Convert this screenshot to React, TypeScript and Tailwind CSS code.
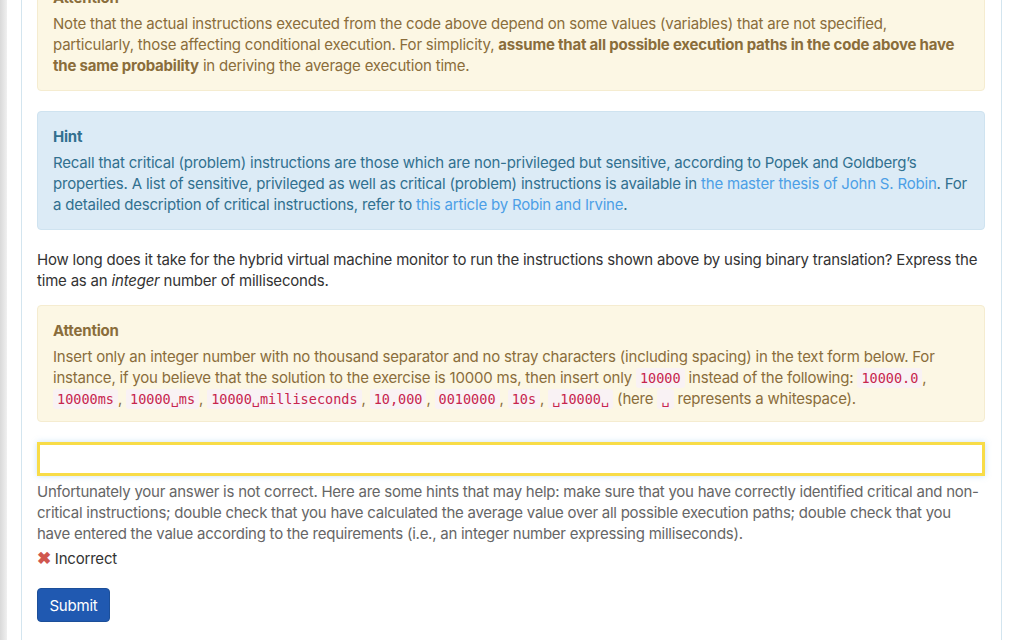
import React from "react";

const C = ({ children }: { children: React.ReactNode }) => (
  <code className="rounded-[3px] bg-[#f9f2f4] px-[4px] py-[2px] text-[13.5px] leading-none tracking-normal text-[#c7254e] [font-family:'DejaVu_Sans_Mono',monospace]">
    {children}
  </code>
);

export default function App() {
  return (
    <div className="flex h-[640px] w-[1024px] overflow-hidden bg-white text-[15px] leading-[21px] tracking-[-0.2px] text-[#333] [font-family:Inter,'Liberation_Sans',sans-serif]">
      <div className="w-[7px] shrink-0 bg-gradient-to-r from-[#d9d9d9] to-[#f0f0f0]" />
      <div className="w-[14px] shrink-0" />
      <div className="w-[981px] shrink-0 border-x border-[#d3e5ef] pl-[15px] pr-[16px]">
        <div className="-mt-[28px] rounded-[4px] border border-[#f5ecd0] bg-[#fcf7e4] px-[15px] py-[14px] text-[#8a6d3b]">
          <div className="mb-[5px] font-bold">Attention</div>
          <p>
            Note that the actual instructions executed from the code above depend on some values (variables) that are not specified,
            particularly, those affecting conditional execution. For simplicity,{" "}
            <b>assume that all possible execution paths in the code above have the same probability</b> in deriving the average
            execution time.
          </p>
        </div>

        <div className="mt-[20px] rounded-[4px] border border-[#cfe3f0] bg-[#dcebf6] px-[15px] py-[14px] text-[#31708f]">
          <div className="mb-[5px] font-bold">Hint</div>
          <p>
            Recall that critical (problem) instructions are those which are non-privileged but sensitive, according to Popek and
            Goldberg’s properties. A list of sensitive, privileged as well as critical (problem) instructions is available in{" "}
            <a className="text-[#4c9fe6]">the master thesis of John S. Robin</a>. For a detailed description of critical
            instructions, refer to <a className="text-[#4c9fe6]">this article by Robin and Irvine</a>.
          </p>
        </div>

        <p className="mt-[19px] mb-[14px]">
          How long does it take for the hybrid virtual machine monitor to run the instructions shown above by using binary
          translation? Express the time as an <i>integer</i> number of milliseconds.
        </p>

        <div className="rounded-[4px] border border-[#f5ecd0] bg-[#fcf7e4] px-[15px] pt-[14px] pb-[12px] text-[#8a6d3b]">
          <div className="mb-[5px] font-bold">Attention</div>
          <p>
            Insert only an integer number with no thousand separator and no stray characters (including spacing) in the text form
            below. For instance, if you believe that the solution to the exercise is 10000 ms, then insert only <C>10000</C> instead
            of the following: <C>10000.0</C>, <C>10000ms</C>, <C>10000␣ms</C>, <C>10000␣milliseconds</C>, <C>10,000</C>,{" "}
            <C>0010000</C>, <C>10s</C>, <C>␣10000␣</C> (here <C>␣</C> represents a whitespace).
          </p>
        </div>

        <div className="mt-[20px] h-[34px] w-full border-[3px] border-[#f8dc48] bg-white shadow-[0_0_6px_rgba(102,175,233,0.35)]" />

        <p className="mt-[5px] tracking-[-0.25px] text-[#666]">
          Unfortunately your answer is not correct. Here are some hints that may help: make sure that you have correctly identified
          critical and non-
          <br />
          critical instructions; double check that you have calculated the average value over all possible execution paths; double
          check that you have entered the value according to the requirements (i.e., an integer number expressing milliseconds).
        </p>

        <div className="mt-[4px] flex items-center gap-[4px]">
          <span className="text-[17px] font-bold text-[#d0574f]">✖</span>
          <span>Incorrect</span>
        </div>

        <button className="mt-[19px] h-[34px] w-[73px] rounded-[4px] border border-[#1c4f99] bg-[#2059b1] text-[15px] text-white">
          Submit
        </button>
      </div>
    </div>
  );
}
